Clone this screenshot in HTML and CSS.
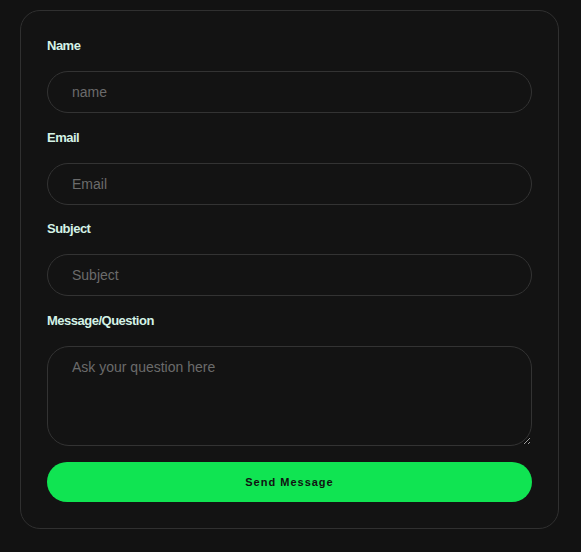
FILE: index.html
```html
<!DOCTYPE html>
<html lang="en">
<head>
  <meta charset="UTF-8">
  <meta name="viewport" content="width=device-width, initial-scale=1.0">
  <title>Contact</title>
  <link rel="stylesheet" href="styles.css">
</head>
<body>

  <!-- Форма обратной связи -->
  <form class="contact-card">
    <div class="field">
      <label for="name">Name</label>
      <input type="text" id="name" placeholder="name">
    </div>
    <div class="field">
      <label for="email">Email</label>
      <input type="email" id="email" placeholder="Email">
    </div>
    <div class="field">
      <label for="subject">Subject</label>
      <input type="text" id="subject" placeholder="Subject">
    </div>
    <div class="field">
      <label for="message">Message/Question</label>
      <textarea id="message" placeholder="Ask your question here"></textarea>
    </div>
    <button type="button" class="send-btn">Send Message</button>
  </form>

</body>
</html>
```

FILE: styles.css
```css
* {
  box-sizing: border-box;
}
body {
  font-family: "Liberation Sans", Arial, sans-serif;
  background-color: #121212;
  margin: 0;
  padding: 10px 0 0 20px;
}
/* Карточка формы */
.contact-card {
  width: 539px;
  margin: 0;
  padding: 27px 26px 26px 26px;
  background-color: #131313;
  border: 1px solid #303030;
  border-radius: 20px;
}
.field {
  margin-bottom: 16.6px;
}
.field label {
  display: block;
  font-size: 13px;
  line-height: 16px;
  font-weight: bold;
  letter-spacing: -0.5px;
  color: #d4f2e6;
  margin-bottom: 17px;
}
.field input,
.field textarea {
  display: block;
  width: 100%;
  height: 42px;
  padding: 0 24px;
  font-family: inherit;
  font-size: 14px;
  color: #ddd;
  background-color: #131313;
  border: 1px solid #333;
  border-radius: 21px;
  outline: none;
}
.field textarea {
  height: 100px;
  padding: 12px 24px;
  border-radius: 22px;
  resize: vertical;
}
.field input::placeholder,
.field textarea::placeholder {
  color: #6b6b6b;
}
/* Кнопка отправки */
.send-btn {
  display: block;
  width: 100%;
  height: 40px;
  margin-top: 16px;
  border: none;
  border-radius: 20px;
  background-color: #10e452;
  color: #111;
  font-family: inherit;
  font-size: 11px;
  font-weight: bold;
  letter-spacing: 1px;
  cursor: pointer;
}
```
